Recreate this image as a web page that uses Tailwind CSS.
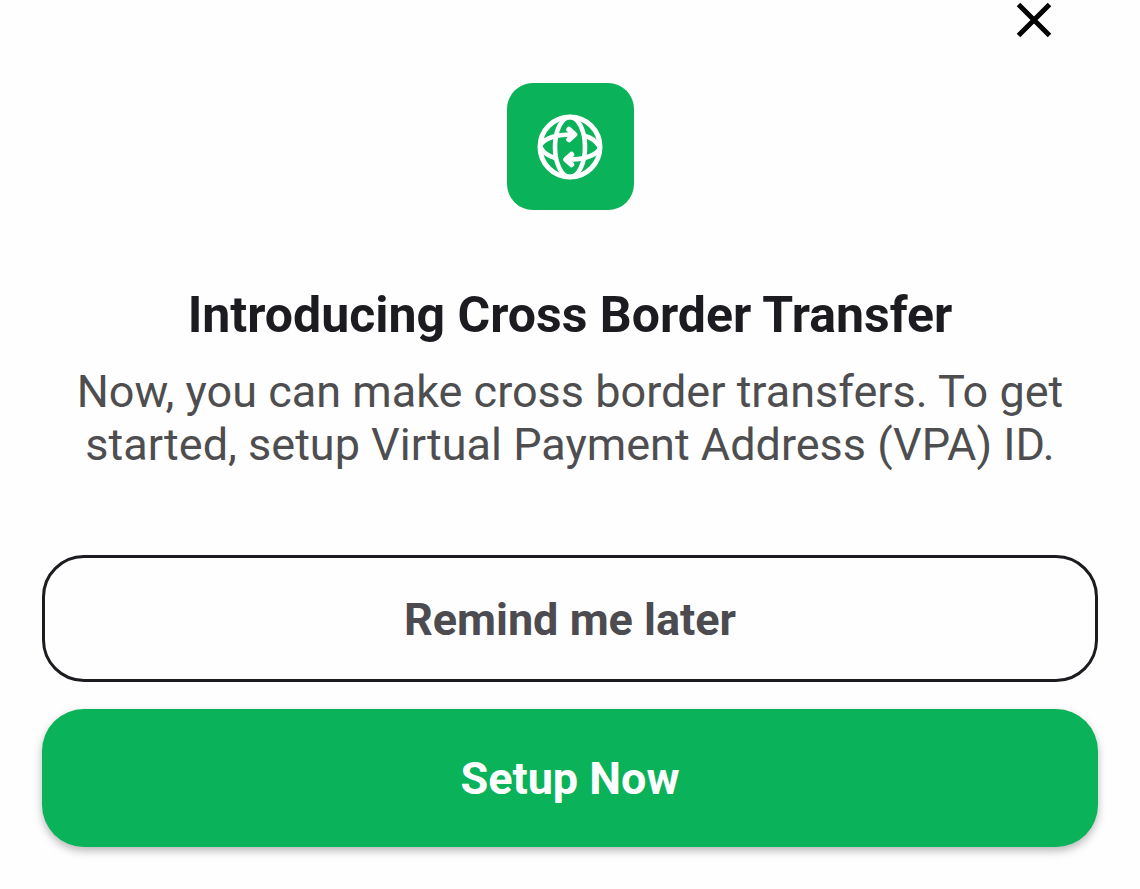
<!DOCTYPE html>
<html lang="en">
<head>
<meta charset="utf-8">
<meta name="viewport" content="width=device-width, initial-scale=1">
<title>Cross Border Transfer</title>
<script src="https://cdn.jsdelivr.net/npm/@tailwindcss/browser@4"></script>
</head>
<body class="min-h-screen bg-[#fefefe] font-[Roboto,sans-serif]">
<main class="flex min-h-screen flex-col px-[42px]">
  <header class="flex justify-end pr-11">
    <button type="button" aria-label="Close" class="flex size-10 items-center justify-center text-black">
      <svg class="size-9" viewBox="0 0 36 36" fill="none" stroke="currentColor" stroke-width="5" aria-hidden="true"><path d="M2.500 2.500l31 31M33.500 2.500l-31 31"/></svg>
    </button>
  </header>
  <section class="flex flex-col items-center pt-[43px] text-center">
    <div class="flex size-[127px] items-center justify-center rounded-[26px] bg-[#0ab25a] text-white">
      <svg class="size-[66px]" viewBox="0 0 66 66" fill="none" stroke="currentColor" stroke-width="4.6" stroke-linecap="round" stroke-linejoin="round" aria-hidden="true">
        <circle cx="33" cy="33" r="30" stroke-width="5"/>
        <ellipse cx="33" cy="33" rx="15" ry="30"/>
        <path d="M4 30C9 24 20 20.500 35 20.500M48 22C55 24 59.500 27.500 62 32"/>
        <path d="M62 36C57 42 46 45.500 31 45.500M18 44C11 42 6.500 38.500 4 34"/>
        <path stroke-width="5.500" d="M32 15.500l5.500 5-5.500 5M34.500 40.500L29 45.500l5.500 5"/>
      </svg>
    </div>
    <h1 class="mt-[76px] text-[50px] leading-[58px] font-bold text-[#1c1c20]">Introducing Cross Border Transfer</h1>
    <p class="mt-[21px] max-w-[1010px] text-[45px] leading-[53px] text-[#4e4e50]">Now, you can make cross border transfers. To get started, setup Virtual Payment Address (VPA) ID.</p>
  </section>
  <div class="mt-[84px] flex flex-col gap-[27px] text-[45px] leading-[53px] font-bold">
    <button type="button" class="rounded-[42px] border-[3px] border-[#1c1c20] pt-[35px] pb-[33px] text-[#4c4b50]">Remind me later</button>
    <button type="button" class="rounded-[42px] bg-[#0ab25a] pt-[43px] pb-[42px] text-white shadow-[0_4px_8px_rgba(0,0,0,0.28)]">Setup Now</button>
  </div>
</main>
</body>
</html>
